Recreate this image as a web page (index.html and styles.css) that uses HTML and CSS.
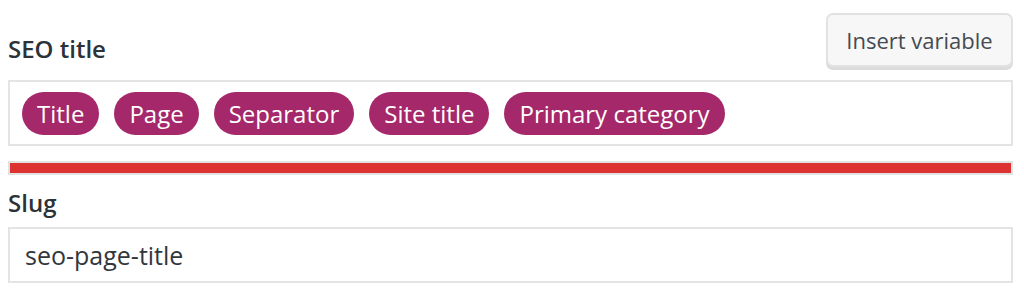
FILE: index.html
```html
<!DOCTYPE html>
<html lang="en">
<head>
<meta charset="utf-8">
<title>SEO title</title>
<link rel="stylesheet" href="styles.css">
</head>
<body>
<div class="panel">
  <div class="field-head">
    <label class="label">SEO title</label>
    <button class="btn" type="button">Insert variable</button>
  </div>
  <div class="editor">
    <span class="pill">Title</span>
    <span class="pill">Page</span>
    <span class="pill">Separator</span>
    <span class="pill">Site title</span>
    <span class="pill">Primary category</span>
  </div>
  <div class="progress"><div class="progress-fill"></div></div>
  <label class="label slug-label">Slug</label>
  <div class="input">seo-page-title</div>
</div>
</body>
</html>
```
FILE: styles.css
```css
html, body {
  margin: 0;
  padding: 0;
  background: #fff;
}
body {
  font-family: "Segoe UI", "Open Sans", "Noto Sans", sans-serif;
  color: #32373c;
}
.panel {
  width: 1005px;
  padding: 13px 0 0 8px;
}
.field-head {
  display: flex;
  justify-content: space-between;
  align-items: flex-end;
  margin-bottom: 10px;
}
.label {
  display: block;
  font-size: 24px;
  font-weight: 600;
  line-height: 30px;
  color: #2c3338;
}
.field-head .label {
  margin-bottom: 6px;
}
.btn {
  height: 54px;
  width: 187px;
  padding: 0;
  border: 2px solid #e2e2e2;
  border-radius: 7px;
  background: #f7f7f7;
  box-shadow: 0 3px 0 #dcdcdc;
  font-family: inherit;
  font-size: 22px;
  color: #454b52;
  margin-bottom: 3px;
}
.editor {
  display: flex;
  align-items: center;
  gap: 15px;
  height: 62px;
  border: 2px solid #e4e4e4;
  padding: 0 12px;
}
.pill {
  display: inline-flex;
  align-items: center;
  height: 43px;
  padding: 0 15px;
  border-radius: 22px;
  background: #a4286a;
  color: #fff;
  font-size: 24px;
}
.progress {
  margin-top: 15px;
  height: 10px;
  border: 2px solid #e2e2e2;
  background: #dc3232;
}
.progress-fill {
  height: 100%;
}
.slug-label {
  margin-top: 13px;
}
.input {
  margin-top: 9px;
  height: 52px;
  border: 2px solid #e4e4e4;
  padding: 0 15px;
  display: flex;
  align-items: center;
  font-size: 25px;
  color: #32373c;
}
```
